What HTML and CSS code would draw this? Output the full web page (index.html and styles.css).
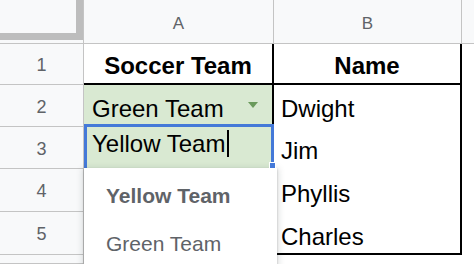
FILE: index.html
```html
<!DOCTYPE html>
<html>
<head>
<meta charset="utf-8">
<link rel="stylesheet" href="styles.css">
</head>
<body>
<div class="sheet">
  <div class="corner"><div class="freeze"></div></div>
  <div class="colhead">A</div>
  <div class="colhead">B</div>
  <div class="colhead last"></div>

  <div class="rowhead">1</div>
  <div class="cell a hdr r1">Soccer Team</div>
  <div class="cell b hdr r1">Name</div>
  <div class="cell c"></div>

  <div class="rowhead">2</div>
  <div class="cell a green"><span>Green Team</span><span class="tri"></span></div>
  <div class="cell b">Dwight</div>
  <div class="cell c"></div>

  <div class="rowhead">3</div>
  <div class="cell a green editing">
    <div class="editor"><span>Yellow Team</span><span class="caret"></span></div>
    <div class="handle"></div>
  </div>
  <div class="cell b">Jim</div>
  <div class="cell c"></div>

  <div class="rowhead">4</div>
  <div class="cell a"></div>
  <div class="cell b">Phyllis</div>
  <div class="cell c"></div>

  <div class="rowhead">5</div>
  <div class="cell a r5"></div>
  <div class="cell b r5">Charles</div>
  <div class="cell c"></div>

  <div class="rowhead"></div>
  <div class="cell blank"></div>
  <div class="cell blank"></div>
  <div class="cell c"></div>

  <div class="menu">
    <div class="item bold">Yellow Team</div>
    <div class="item">Green Team</div>
  </div>
</div>
</body>
</html>
```

FILE: styles.css
```css
* { box-sizing: border-box; }
html, body { margin: 0; padding: 0; background: #fff; }
body { width: 474px; height: 264px; overflow: hidden; }

.sheet {
  position: relative;
  display: grid;
  grid-template-columns: 84px 190px 188px 1fr;
  grid-template-rows: 44px 41px 42px 42px 43px 43px 1fr;
  width: 474px;
  height: 264px;
  overflow: hidden;
  font-family: "Liberation Sans", Arial, sans-serif;
}

.corner {
  background: #f8f9fa;
  border-right: 1px solid #c4c4c4;
  border-bottom: 1px solid #c4c4c4;
  padding: 0 0 3px 0;
}
.freeze {
  height: 100%;
  border-right: 7px solid #bdbdbd;
  border-bottom: 7px solid #bdbdbd;
}

.colhead {
  background: #f8f9fa;
  border-right: 1px solid #c4c4c4;
  border-bottom: 1px solid #c4c4c4;
  color: #5f6368;
  font-size: 17px;
  display: flex;
  align-items: center;
  justify-content: center;
  padding-top: 4px;
}
.colhead.last { border-right: none; }

.rowhead {
  background: #f8f9fa;
  border-right: 1px solid #c4c4c4;
  border-bottom: 1px solid #c4c4c4;
  color: #5f6368;
  font-size: 18px;
  display: flex;
  align-items: center;
  justify-content: center;
  padding-top: 3px;
}

.cell {
  display: flex;
  align-items: flex-end;
  font-size: 24px;
  line-height: 24px;
  color: #000;
  white-space: nowrap;
  padding: 0 7px 6px 8px;
}
.cell.a { border-right: 2px solid #000; }
.cell.b { border-right: 2px solid #000; padding-left: 7px; }
.cell.r1 { border-bottom: 2px solid #000; padding-bottom: 5px; }
.cell.r5 { border-bottom: 2px solid #000; padding-bottom: 4px; }
.cell.hdr { font-weight: bold; justify-content: center; padding-left: 0; padding-right: 0; }

.green { background: #d9e9d2; }
.tri {
  margin-left: auto;
  margin-right: 7px;
  align-self: center;
  margin-top: 4px;
  width: 0;
  height: 0;
  border-left: 5px solid transparent;
  border-right: 5px solid transparent;
  border-top: 6px solid #6a9a5c;
}

.editing { position: relative; }
.editor {
  position: absolute;
  top: -3px;
  left: 0;
  right: -2px;
  bottom: -2px;
  border: 3px solid #4479d8;
  background: #d9e9d2;
  padding: 5px 0 0 5px;
  font-size: 24px;
  line-height: 24px;
  display: flex;
  align-items: flex-start;
}
.caret {
  display: inline-block;
  width: 2px;
  height: 27px;
  margin-left: 2px;
  margin-top: -2px;
  background: #000;
}
.handle {
  position: absolute;
  right: -4px;
  bottom: 0;
  width: 7px;
  height: 7px;
  background: #4479d8;
  border: 1px solid #fff;
  z-index: 3;
}

.menu {
  position: absolute;
  left: 84px;
  top: 168px;
  width: 193px;
  height: 130px;
  background: #fff;
  box-shadow: 0 1px 2px rgba(60, 64, 67, 0.3), 0 2px 6px 2px rgba(60, 64, 67, 0.15);
  padding-top: 4px;
  z-index: 2;
}
.item {
  font-size: 21px;
  line-height: 48px;
  color: #5f6368;
  padding-left: 22px;
  white-space: nowrap;
}
.item.bold { font-weight: bold; }
```
